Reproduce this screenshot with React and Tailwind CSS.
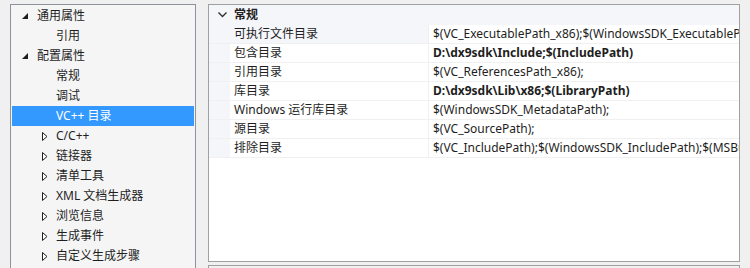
import React from 'react'

const font = { fontFamily: '"Noto Sans", "Noto Sans CJK SC", sans-serif' }

const tree = [
  { text: '通用属性', level: 1, open: true },
  { text: '引用', level: 2 },
  { text: '配置属性', level: 1, open: true },
  { text: '常规', level: 2 },
  { text: '调试', level: 2 },
  { text: 'VC++ 目录', level: 2, selected: true },
  { text: 'C/C++', level: 2, closed: true },
  { text: '链接器', level: 2, closed: true },
  { text: '清单工具', level: 2, closed: true },
  { text: 'XML 文档生成器', level: 2, closed: true },
  { text: '浏览信息', level: 2, closed: true },
  { text: '生成事件', level: 2, closed: true },
  { text: '自定义生成步骤', level: 2, closed: true },
]

const props = [
  { name: '可执行文件目录', value: '$(VC_ExecutablePath_x86);$(WindowsSDK_ExecutablePath);$(VS_ExecutablePath)', active: true },
  { name: '包含目录', value: 'D:\\dx9sdk\\Include;$(IncludePath)', bold: true },
  { name: '引用目录', value: '$(VC_ReferencesPath_x86);' },
  { name: '库目录', value: 'D:\\dx9sdk\\Lib\\x86;$(LibraryPath)', bold: true },
  { name: 'Windows 运行库目录', value: '$(WindowsSDK_MetadataPath);' },
  { name: '源目录', value: '$(VC_SourcePath);' },
  { name: '排除目录', value: '$(VC_IncludePath);$(WindowsSDK_IncludePath);$(MSBuild_ExecutablePath)' },
]

function TreeRow({ item }) {
  const pad = item.level === 1 ? 'pl-[10px]' : item.closed ? 'pl-[30px]' : 'pl-[44px]'
  return (
    <div
      className={`flex h-[20px] items-center whitespace-nowrap ${pad} ${
        item.selected ? 'bg-[#3399ff] text-white' : 'text-[#1e1e1e]'
      }`}
    >
      {item.level === 1 && (
        <span className="flex w-[15px] items-center">
          <svg width="6" height="6" viewBox="0 0 6 6">
            <polygon points="6,0 6,6 0,6" fill="#1e1e1e" />
          </svg>
        </span>
      )}
      {item.closed && (
        <span className="flex w-[14px] items-center">
          <svg width="6" height="9" viewBox="0 0 6 9">
            <polygon points="0.5,0.5 5,4.5 0.5,8.5" fill="#ffffff" stroke="#1e1e1e" strokeWidth="1" />
          </svg>
        </span>
      )}
      <span className="text-[12px] leading-none">{item.text}</span>
    </div>
  )
}

function PropRow({ row }) {
  return (
    <div className="flex h-[19px] border-b border-[#f0f0f0]">
      <div className="w-[21px] shrink-0 bg-[#f5f6fa]" />
      <div
        className={`flex w-[199px] shrink-0 items-center border-r border-[#f0f0f0] pl-[4px] ${
          row.active ? 'bg-[#f5f6fa]' : 'bg-white'
        }`}
      >
        <span className="whitespace-nowrap text-[12px] leading-none text-[#1e1e1e]">{row.name}</span>
      </div>
      <div className="flex min-w-0 flex-1 items-center overflow-hidden bg-white pl-[4px]">
        <span
          className={`whitespace-nowrap text-[12px] leading-none text-[#1e1e1e] ${row.bold ? 'font-bold' : ''}`}
        >
          {row.value}
        </span>
      </div>
    </div>
  )
}

export default function App() {
  return (
    <div className="flex h-[268px] w-[750px] overflow-hidden bg-[#f0f0f0]" style={font}>
      <div className="ml-[10px] mt-[4px] h-[300px] w-[186px] shrink-0 border border-b-0 border-[#8e929c] bg-[#f5f5f5] px-px pt-px">
        {tree.map((item) => (
          <TreeRow key={item.text} item={item} />
        ))}
      </div>

      <div className="ml-[12px] mt-[4px] flex w-[532px] shrink-0 flex-col">
        <div className="flex h-[258px] shrink-0 flex-col border border-[#a0a0a0] bg-white">
          <div className="flex h-[20px] items-center bg-[#f5f6fa]">
            <span className="flex w-[25px] items-center justify-center pl-[2px]">
              <svg width="9" height="6" viewBox="0 0 9 6">
                <polyline points="0.5,0.5 4.5,4.5 8.5,0.5" fill="none" stroke="#333" strokeWidth="1.4" />
              </svg>
            </span>
            <span className="text-[12px] font-bold leading-none text-[#1e1e1e]">常规</span>
          </div>
          {props.map((row) => (
            <PropRow key={row.name} row={row} />
          ))}
        </div>
        <div className="mt-[3px] h-[40px] shrink-0 border border-[#a0a0a0] bg-[#f0f0f0]" />
      </div>
    </div>
  )
}
